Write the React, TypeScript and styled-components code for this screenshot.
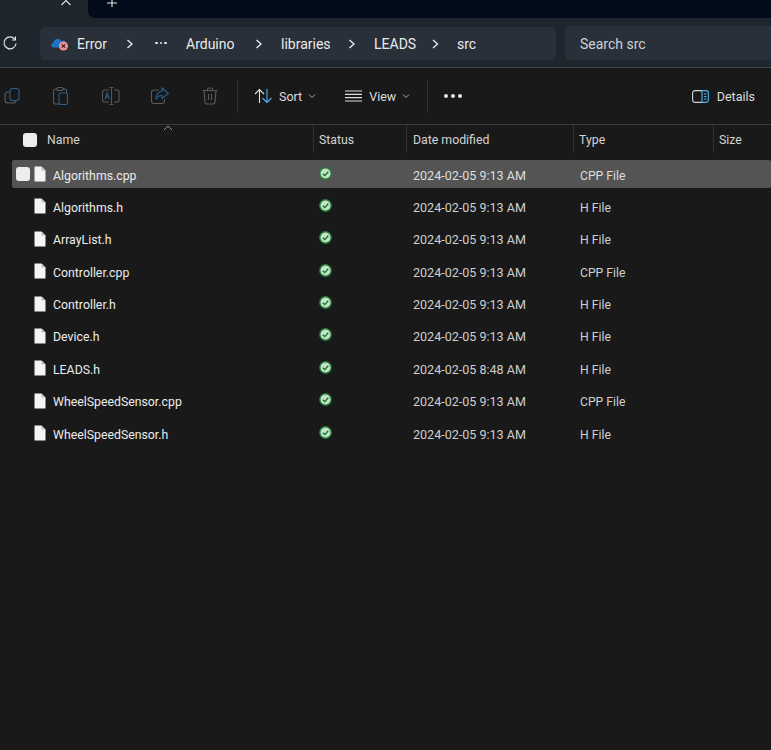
import React from "react";
import styled, { createGlobalStyle } from "styled-components";

const Global = createGlobalStyle`
  html, body { margin: 0; padding: 0; background: #191919; }
  body { font-family: Roboto, "Open Sans", "Liberation Sans", sans-serif; font-size: 12.5px; color: #e6e6e6; }
  * { box-sizing: border-box; }
`;
const Page = styled.div`width: 771px; height: 750px; overflow: hidden; background: #191919; display: flex; flex-direction: column;`;
const TitleBar = styled.div`height: 18px; display: flex; background: #1e252d;`;
const Tab = styled.div`width: 88px; display: flex; justify-content: flex-end; padding-right: 16px;`;
const TabStrip = styled.div`flex: 1; background: #020b19; border-bottom-left-radius: 7px; padding-left: 18px;`;
const TabGlyph = styled.svg`display: block; width: 12px; height: 18px; fill: none; stroke: #e8e8e8; stroke-width: 1.1;`;
const NavBar = styled.div`height: 50px; background: #1e252d; border-bottom: 1px solid #3f4145; display: flex; align-items: center; padding-left: 2px;`;
const Refresh = styled.svg`width: 16px; height: 16px; margin-left: 0; margin-right: 22px; fill: none; stroke: #e4e6e8; stroke-width: 1.2; flex: none;`;
const Crumbs = styled.div`width: 516px; height: 33px; margin-top: 1px; background: #2a3039; border-radius: 5px; display: flex; align-items: center; font-size: 14px; color: #e9eaec; padding-left: 11px;`;
const CloudIcon = styled.svg`flex: none; margin-right: 8px;`;
const CrumbLabel = styled.span<{ $w: number }>`width: ${(p) => p.$w}px; flex: none; white-space: nowrap; padding-top: 2px;`;
const CrumbDots = styled.div`width: 33px; flex: none; padding-left: 2px; display: flex; gap: 2px;`;
const CrumbDot = styled.span`width: 2.5px; height: 2.5px; border-radius: 50%; background: #e6e6e6;`;
const Chevron = styled.svg<{ $w: number }>`width: ${(p) => p.$w}px; height: 12px; margin-top: 1px; flex: none; fill: none; stroke: #eceef0; stroke-width: 1.3;`;
const Search = styled.div`margin-left: 9px; flex: 1; height: 34px; background: #2a3039; border-radius: 5px 0 0 5px; display: flex; align-items: center; padding: 2px 0 0 15px; font-size: 14px; color: #cfd2d6;`;
const Toolbar = styled.div`height: 57px; background: #191919; border-bottom: 1px solid #3a3a3a; display: flex; align-items: center; padding-left: 0;`;
const ActionIcon = styled.svg`width: 20px; height: 20px; flex: none; fill: none; stroke-width: 1.1;`;
const ActionSlots = styled.div`display: flex; margin-left: -13px; flex: none;`;
const ActionSlot = styled.div`width: 49.5px; flex: none; display: flex; justify-content: center;`;
const Divider = styled.div<{ $ml: number }>`width: 1px; height: 33px; background: #303030; flex: none; margin-left: ${(p) => p.$ml}px;`;
const ToolButton = styled.div<{ $ml: number; $mr?: number }>`display: flex; align-items: center; margin-left: ${(p) => p.$ml}px; margin-right: ${(p) => p.$mr ?? 0}px; color: #dcdcdc; font-size: 12.5px; white-space: nowrap;`;
const SortGlyph = styled.svg`margin-right: 5px; flex: none;`;
const ViewGlyph = styled.svg`margin-right: 7px; flex: none;`;
const DetailsGlyph = styled.svg`margin-right: 8px; flex: none;`;
const Caret = styled.svg`width: 8px; height: 6px; margin-left: 6px; fill: none; stroke: #a5a5a5; stroke-width: 1;`;
const Dots = styled.div`margin-left: 16px; margin-right: auto; display: flex; gap: 3px;`;
const Dot = styled.span`width: 4px; height: 4px; border-radius: 50%; background: #e6e6e6;`;
const Header = styled.div`height: 30px; display: grid; grid-template-columns: 313px 93px 167px 140px 1fr; position: relative; color: #d4d4d4;`;
const HeaderCell = styled.div<{ $pad?: number; $plain?: boolean }>`display: flex; align-items: center; font-size: 12.3px; padding-left: ${(p) => p.$pad ?? 5}px; ${(p) => (p.$plain ? "" : "border-left: 1px solid #333;")} height: 28px; padding-top: 2px;`;
const SortArrow = styled.svg`position: absolute; left: 163px; top: 0; width: 10px; height: 6px; fill: none; stroke: #9a9a9a; stroke-width: 1;`;
const Box = styled.div<{ $mr: number }>`width: 14px; height: 14px; border-radius: 3px; background: #ededed; flex: none; margin-right: ${(p) => p.$mr}px;`;
const List = styled.div`margin-top: 5px; margin-left: 12px; display: flex; flex-direction: column; gap: 4.4px;`;
const Row = styled.div<{ $active?: boolean }>`height: 28px; display: grid; grid-template-columns: 301px 93px 167px 140px 1fr; align-items: center; background: ${(p) => (p.$active ? "#545454" : "transparent")}; border-radius: 2px;`;
const NameCell = styled.div<{ $active?: boolean }>`display: flex; align-items: center; padding-left: ${(p) => (p.$active ? 4 : 22)}px; white-space: nowrap; color: #ececec;`;
const NameText = styled.span`font-size: 12.3px; padding-top: 3px;`;
const FileIcon = styled.svg`width: 12px; height: 16px; margin-right: 7px; flex: none;`;
const StatusCell = styled.div`padding-left: 6px; display: flex; align-items: center; height: 100%;`;
const StatusIcon = styled.svg`width: 13px; height: 13px; margin-top: -2px;`;
const TextCell = styled.div<{ $active?: boolean; $size: number; $top: number }>`padding: ${(p) => p.$top}px 0 0 7px; font-size: ${(p) => p.$size}px; color: ${(p) => (p.$active ? "#dedede" : "#cfcfcf")}; white-space: nowrap;`;

const files = [
  ["Algorithms.cpp", "2024-02-05 9:13 AM", "CPP File"],
  ["Algorithms.h", "2024-02-05 9:13 AM", "H File"],
  ["ArrayList.h", "2024-02-05 9:13 AM", "H File"],
  ["Controller.cpp", "2024-02-05 9:13 AM", "CPP File"],
  ["Controller.h", "2024-02-05 9:13 AM", "H File"],
  ["Device.h", "2024-02-05 9:13 AM", "H File"],
  ["LEADS.h", "2024-02-05 8:48 AM", "H File"],
  ["WheelSpeedSensor.cpp", "2024-02-05 9:13 AM", "CPP File"],
  ["WheelSpeedSensor.h", "2024-02-05 9:13 AM", "H File"],
];

const Chev = ({ w }: { w: number }) => (
  <Chevron $w={w} viewBox={`0 0 ${w} 12`}>
    <path d={`M${w / 2 - 2.5} 2 L${w / 2 + 2} 6 L${w / 2 - 2.5} 10`} />
  </Chevron>
);

const grey = "#5a5a5a";
const blue = "#2b5f8c";

export default function App() {
  return (
    <Page>
      <Global />
      <TitleBar>
        <Tab>
          <TabGlyph viewBox="0 0 12 18"><path d="M1.5 -4 L10.5 5 M10.5 -4 L1.5 5" /></TabGlyph>
        </Tab>
        <TabStrip>
          <TabGlyph viewBox="0 0 12 18"><path d="M6 -3 V7 M1 3 H11" /></TabGlyph>
        </TabStrip>
      </TitleBar>
      <NavBar>
        <Refresh viewBox="0 0 16 16">
          <path d="M13 4.5 A6 6 0 1 0 14 8.5" />
          <path d="M13.4 1.5 V5 H10" />
        </Refresh>
        <Crumbs>
          <CloudIcon width="18" height="16" viewBox="0 0 18 16">
            <path d="M2 12.5 A2.6 2.6 0 0 1 2.5 7.5 A4 4 0 0 1 10 6 A3 3 0 0 1 13 12.5 Z" fill="#1f74c9" />
            <circle cx="12.5" cy="11" r="4.6" fill="#ef8f95" />
            <path d="M10.8 9.3 L14.2 12.7 M14.2 9.3 L10.8 12.7" stroke="#40222a" strokeWidth="1.2" />
          </CloudIcon>
          <CrumbLabel $w={30}>Error</CrumbLabel>
          <Chev w={46} />
          <CrumbDots><CrumbDot /><CrumbDot /><CrumbDot /></CrumbDots>
          <CrumbLabel $w={51}>Arduino</CrumbLabel>
          <Chev w={44} />
          <CrumbLabel $w={49}>libraries</CrumbLabel>
          <Chev w={44} />
          <CrumbLabel $w={40}>LEADS</CrumbLabel>
          <Chev w={43} />
          <CrumbLabel $w={20}>src</CrumbLabel>
        </Crumbs>
        <Search>Search src</Search>
      </NavBar>
      <Toolbar>
        <ActionSlots>
          <ActionSlot>
            <ActionIcon viewBox="0 0 20 20">
              <rect x="3" y="6" width="11" height="11" rx="3" stroke={grey} />
              <rect x="8" y="2.5" width="9" height="12" rx="2.5" stroke={blue} fill="#191919" />
            </ActionIcon>
          </ActionSlot>
          <ActionSlot>
            <ActionIcon viewBox="0 0 20 20">
              <path d="M6 3 H4.5 A2 2 0 0 0 2.5 5 V16 A2 2 0 0 0 4.5 18 H8 M12 3 H14 A1.5 1.5 0 0 1 15.5 5 V7" stroke={grey} />
              <rect x="6" y="1.5" width="6" height="3" rx="1" stroke={grey} />
              <rect x="8" y="7" width="8.5" height="11.5" rx="2" stroke={blue} />
            </ActionIcon>
          </ActionSlot>
          <ActionSlot>
            <ActionIcon viewBox="0 0 20 20">
              <path d="M8 4 H3 A2 2 0 0 0 1.5 6 V14 A2 2 0 0 0 3 16 H8 M13 4 H16 A2 2 0 0 1 18 6 V14 A2 2 0 0 1 16 16 H13" stroke={grey} />
              <path d="M8.5 1.5 H12.5 M8.5 18.5 H12.5 M10.5 1.5 V18.5" stroke={blue} />
              <path d="M4.2 13 L6.2 7 L8.2 13 M5 11 H7.5" stroke={blue} />
            </ActionIcon>
          </ActionSlot>
          <ActionSlot>
            <ActionIcon viewBox="0 0 20 20">
              <path d="M9 4 H4 A2.5 2.5 0 0 0 1.5 6.5 V15 A2.5 2.5 0 0 0 4 17.5 H12 A2.5 2.5 0 0 0 14.5 15 V13" stroke={grey} />
              <path d="M12 2 L18.5 7.5 L12 12.5 V9.5 C9 9.5 7 11 6 13.5 C6 9 8.5 5.5 12 5.3 Z" stroke={blue} />
            </ActionIcon>
          </ActionSlot>
          <ActionSlot>
            <ActionIcon viewBox="0 0 20 20">
              <path d="M2.5 4.5 H17.5 M7.5 4.5 V3.5 A1.5 1.5 0 0 1 9 2 H11 A1.5 1.5 0 0 1 12.5 3.5 V4.5 M4 4.5 L5 16 A2 2 0 0 0 7 18 H13 A2 2 0 0 0 15 16 L16 4.5 M8.5 8 V14 M11.5 8 V14" stroke={grey} />
            </ActionIcon>
          </ActionSlot>
        </ActionSlots>
        <Divider $ml={2.5} />
        <ToolButton $ml={16}>
          <SortGlyph width="20" height="18" viewBox="0 0 20 18" fill="none">
            <path d="M5.5 16 V3 M1 7 L5.5 2.5 L10 7" stroke="#e2e2e2" strokeWidth="1.1" />
            <path d="M13 2 V15.5 M8.5 11 L13 15.5 L17.5 11" stroke="#4cb3ef" strokeWidth="1.1" />
          </SortGlyph>
          Sort
          <Caret viewBox="0 0 8 6"><path d="M1 1.5 L4 4.5 L7 1.5" /></Caret>
        </ToolButton>
        <ToolButton $ml={29}>
          <ViewGlyph width="17" height="12" viewBox="0 0 17 12" fill="none">
            <path d="M0 1 H17 M0 4.3 H17 M0 7.6 H17 M0 11 H17" stroke="#dcdcdc" strokeWidth="1.2" />
          </ViewGlyph>
          View
          <Caret viewBox="0 0 8 6"><path d="M1 1.5 L4 4.5 L7 1.5" /></Caret>
        </ToolButton>
        <Divider $ml={17} />
        <Dots><Dot /><Dot /><Dot /></Dots>
        <ToolButton $ml={0} $mr={16}>
          <DetailsGlyph width="17" height="13" viewBox="0 0 17 13" fill="none">
            <path d="M10 .6 H3 A2.4 2.4 0 0 0 .6 3 V10 A2.4 2.4 0 0 0 3 12.4 H10" stroke="#d4d4d4" strokeWidth="1.1" />
            <path d="M10 .6 H14 A2.4 2.4 0 0 1 16.4 3 V10 A2.4 2.4 0 0 1 14 12.4 H10 Z" stroke="#4cb3ef" strokeWidth="1.1" />
            <path d="M12 4 H14.5 M12 6.5 H14.5 M12 9 H14.5" stroke="#4cb3ef" />
          </DetailsGlyph>
          Details
        </ToolButton>
      </Toolbar>
      <Header>
        <SortArrow viewBox="0 0 10 6"><path d="M1 5 L5 1 L9 5" /></SortArrow>
        <HeaderCell $plain $pad={23}><Box $mr={10} />Name</HeaderCell>
        <HeaderCell>Status</HeaderCell>
        <HeaderCell $pad={6}>Date modified</HeaderCell>
        <HeaderCell>Type</HeaderCell>
        <HeaderCell>Size</HeaderCell>
      </Header>
      <List>
        {files.map(([name, date, type], i) => (
          <Row key={name} $active={i === 0}>
            <NameCell $active={i === 0}>
              {i === 0 && <Box $mr={4} />}
              <FileIcon viewBox="0 0 12 16">
                <path d="M0.5 0.5 H7.5 L11.5 4.5 V15.5 H0.5 Z" fill="#f4f4f4" />
                <path d="M7.5 0.5 V4.5 H11.5 Z" fill="#bdbdbd" />
              </FileIcon>
              <NameText>{name}</NameText>
            </NameCell>
            <StatusCell>
              <StatusIcon viewBox="0 0 13 13">
                <circle cx="6.5" cy="6.5" r="5.7" fill="#c4e2c8" stroke="#237f3a" strokeWidth="1.4" />
                <path d="M3.8 6.7 L5.8 8.6 L9.3 4.8" fill="none" stroke="#146c2c" strokeWidth="1.3" />
              </StatusIcon>
            </StatusCell>
            <TextCell $active={i === 0} $size={12.55} $top={2}>{date}</TextCell>
            <TextCell $active={i === 0} $size={12.2} $top={3}>{type}</TextCell>
            <div />
          </Row>
        ))}
      </List>
    </Page>
  );
}
